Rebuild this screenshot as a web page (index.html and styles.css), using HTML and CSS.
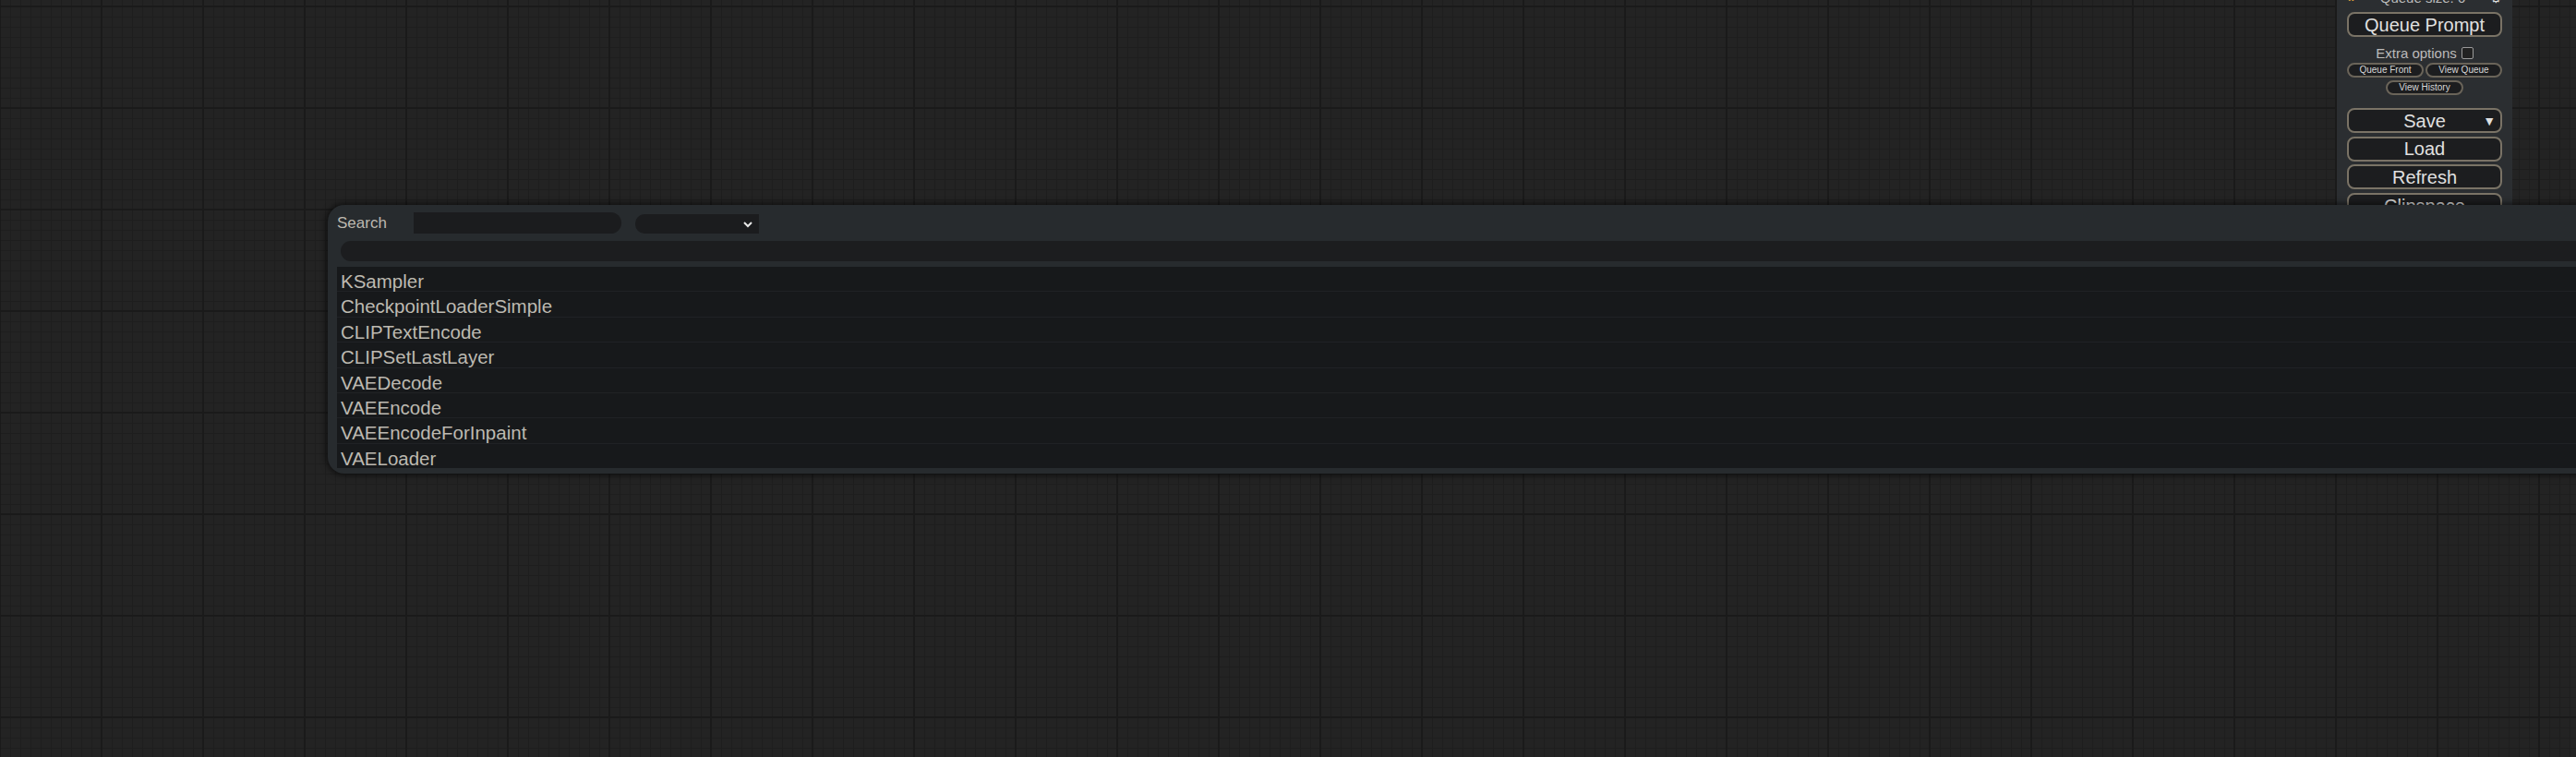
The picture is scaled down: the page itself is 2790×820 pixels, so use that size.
FILE: index.html
```html
<!DOCTYPE html>
<html lang="en">

<head>
    <meta charset="UTF-8">
    <meta name="viewport" content="width=device-width, initial-scale=1.0">
    <title>ComfyUI</title>
    <link rel="stylesheet" href="styles.css">
</head>

<body>

    <div class="graph-canvas"></div>

    <div class="comfy-menu">
        <div class="queue-header">
            <span class="drag-handle">⠿</span>
            <span class="queue-size">Queue size: 0</span>
            <span class="gear">⚙</span>
        </div>
        <button class="menu-btn queue-btn">Queue Prompt</button>
        <div class="extra-options">
            <span>Extra options</span>
            <span class="checkbox"></span>
        </div>
        <div class="small-row">
            <button class="small-btn">Queue Front</button>
            <button class="small-btn">View Queue</button>
        </div>
        <div class="small-row centered">
            <button class="small-btn">View History</button>
        </div>
        <button class="menu-btn save-btn">Save<span class="arrow">▼</span></button>
        <button class="menu-btn">Load</button>
        <button class="menu-btn">Refresh</button>
        <button class="menu-btn">Clipspace</button>
    </div>

    <div class="node-search">
        <div class="search-row">
            <span class="search-label">Search</span>
            <div class="search-input"></div>
            <div class="search-select">
                <svg width="12" height="8" viewBox="0 0 12 8">
                    <polyline points="2,2 6,6 10,2" fill="none" stroke="#e8e8e8" stroke-width="2"/>
                </svg>
            </div>
        </div>
        <div class="filter-bar"></div>
        <div class="node-list">
            <div class="node-item">KSampler</div>
            <div class="node-item">CheckpointLoaderSimple</div>
            <div class="node-item">CLIPTextEncode</div>
            <div class="node-item">CLIPSetLastLayer</div>
            <div class="node-item">VAEDecode</div>
            <div class="node-item">VAEEncode</div>
            <div class="node-item">VAEEncodeForInpaint</div>
            <div class="node-item">VAELoader</div>
        </div>
    </div>

</body>

</html>
```

FILE: styles.css
```css
body {
    margin: 0;
    width: 2790px;
    height: 820px;
    overflow: hidden;
    position: relative;
    background-color: #222222;
    font-family: "Liberation Sans", Arial, sans-serif;
}

.graph-canvas {
    width: 100%;
    height: 100%;
    background-color: #232323;
    background-image:
        linear-gradient(to right, #1a1a1a 2px, transparent 2px),
        linear-gradient(to bottom, #1a1a1a 2px, transparent 2px),
        linear-gradient(to right, #1e1e1e 1px, transparent 1px),
        linear-gradient(to bottom, #1e1e1e 1px, transparent 1px);
    background-size: 110px 110px, 110px 110px, 11px 11px, 11px 11px;
    background-position: -1px 6px, -1px 6px, 0 7px, 0 7px;
}

/* floating menu on the right */
.comfy-menu {
    position: absolute;
    top: -11px;
    left: 2531px;
    width: 190px;
    box-sizing: border-box;
    padding: 0 11px 20px;
    background-color: #2b2e31;
    display: flex;
    flex-direction: column;
    align-items: stretch;
    color: #dddddd;
}

.queue-header {
    height: 18px;
    display: flex;
    align-items: center;
    justify-content: space-between;
    font-size: 15px;
    line-height: 18px;
    color: #bbbbbb;
}

.drag-handle {
    color: #d99a3c;
    font-size: 12px;
}

.gear {
    color: #dddddd;
    font-size: 14px;
}

.menu-btn {
    height: 27px;
    margin-top: 3.7px;
    padding: 0;
    box-sizing: border-box;
    border: 2px solid #7a7366;
    border-radius: 8px;
    background-color: #1c1d1f;
    color: #e0e0e0;
    font-family: "Liberation Sans", Arial, sans-serif;
    font-size: 20px;
    line-height: 22px;
    position: relative;
}

.queue-btn {
    margin-top: 6px;
}

.save-btn {
    margin-top: 14px;
}

.arrow {
    position: absolute;
    right: 5px;
    top: 5px;
    font-size: 14px;
    line-height: 14px;
}

.extra-options {
    margin-top: 8px;
    height: 18px;
    display: flex;
    align-items: center;
    justify-content: center;
    gap: 5px;
    font-size: 15px;
    color: #bbbbbb;
}

.checkbox {
    width: 11px;
    height: 11px;
    border: 1px solid #9a9a9a;
    border-radius: 2px;
    background-color: #222;
}

.small-row {
    display: flex;
    gap: 2px;
    margin-top: 2px;
}

.small-row.centered {
    justify-content: center;
    margin-top: 3px;
}

.small-btn {
    width: 84px;
    height: 16px;
    padding: 0;
    box-sizing: border-box;
    border: 2px solid #6a6459;
    border-radius: 8px;
    background-color: #1c1d1f;
    color: #d8d8d8;
    font-family: "Liberation Sans", Arial, sans-serif;
    font-size: 10px;
    line-height: 12px;
}

/* node search dialog */
.node-search {
    position: absolute;
    left: 355px;
    top: 222px;
    width: 2600px;
    height: 291px;
    box-sizing: border-box;
    padding: 8px 10px 0;
    background-color: #272b2e;
    border-radius: 18px;
    box-shadow: 0 0 6px 2px rgba(0, 0, 0, 0.55);
    display: flex;
    flex-direction: column;
}

.search-row {
    display: flex;
    align-items: center;
    height: 23px;
}

.search-label {
    width: 83px;
    font-size: 17px;
    color: #bdb9b0;
}

.search-input {
    width: 225px;
    height: 23px;
    background-color: #1b1c1e;
    border-radius: 0 12px 12px 0;
}

.search-select {
    margin-left: 15px;
    margin-top: 2px;
    width: 134px;
    height: 21px;
    box-sizing: border-box;
    padding-right: 6px;
    background-color: #1b1c1e;
    border-radius: 10px 0 0 10px;
    display: flex;
    align-items: center;
    justify-content: flex-end;
}

.filter-bar {
    margin: 8px 0 0 4px;
    height: 22px;
    background-color: #1c1d1f;
    border-radius: 11px 0 0 11px;
}

.node-list {
    margin-top: 6px;
    background-color: #17191b;
}

.node-item {
    height: 26.4px;
    border-bottom: 1px solid #202225;
    padding-left: 4px;
    font-size: 20.5px;
    line-height: 32px;
    color: #bdb9b1;
}

.node-item:last-child {
    border-bottom: none;
}
```
